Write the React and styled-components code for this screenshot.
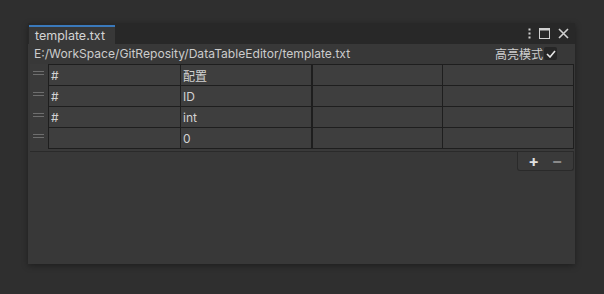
import React from "react";
import styled, { createGlobalStyle } from "styled-components";

const Global = createGlobalStyle`
  body {
    margin: 0;
    background: #2f2f2f;
    font-family: Inter, "Noto Sans CJK SC", sans-serif;
  }
`;

const Page = styled.div`
  width: 604px;
  height: 294px;
  padding: 23px 0 0 28px;
  box-sizing: border-box;
`;

const Window = styled.div`
  width: 547px;
  height: 241px;
  background: #383838;
  display: flex;
  flex-direction: column;
  box-shadow: 0 2px 6px rgba(0, 0, 0, 0.35);
`;

const TabBar = styled.div`
  height: 21px;
  background: #282828;
  display: flex;
  align-items: flex-end;
  padding-left: 1px;
`;

const Tab = styled.div`
  width: 86px;
  height: 19px;
  box-sizing: border-box;
  border-top: 2px solid #3a79bb;
  background: #383838;
  color: #d4d4d4;
  font-size: 12.5px;
  padding-left: 6px;
  display: flex;
  align-items: center;
`;

const TabTools = styled.div`
  margin-left: auto;
  align-self: center;
  display: flex;
  align-items: center;
  gap: 8px;
  padding-right: 6px;
  color: #d0d0d0;
`;

const PathBar = styled.div`
  height: 19px;
  display: flex;
  align-items: center;
  padding: 0 18px 0 6px;
  color: #cccccc;
  font-size: 12.1px;
`;

const Highlight = styled.label`
  margin-left: auto;
  display: flex;
  align-items: center;
  gap: 1px;
  color: #cfcfcf;
  font-size: 12px;
`;

const Check = styled.span`
  width: 13px;
  height: 13px;
  background: #262626;
  border-radius: 2px;
  display: flex;
  align-items: center;
  justify-content: center;
`;

const List = styled.div`
  margin: 1px 0 0 2px;
  width: 544px;
  background: #3a3a3a;
  display: flex;
  border-bottom: 1px solid #2a2a2a;
  padding-bottom: 2px;
`;

const Handles = styled.div`
  width: 19px;
  display: flex;
  flex-direction: column;
  padding-top: 1px;
`;

const Handle = styled.div`
  height: 21px;
  display: flex;
  flex-direction: column;
  gap: 2px;
  padding: 6px 0 0 3px;
  box-sizing: border-box;
  & > span {
    display: block;
    width: 11px;
    height: 1px;
    background: #6e6e6e;
  }
`;

const Grid = styled.div`
  flex: 1;
  display: grid;
  grid-template-columns: 131px 130px 130px 131px;
  border: 1px solid #1e1e1e;
  border-right: none;
  background: #1e1e1e;
  gap: 1px;
`;

const Cell = styled.div`
  height: 20px;
  background: #3e3e3e;
  color: #d2d2d2;
  font-size: 12px;
  display: flex;
  align-items: center;
  padding-left: 2px;
  border-left: ${(p) => (p.thick ? "1px solid #1e1e1e" : "none")};
  border-right: ${(p) => (p.last ? "1px solid #1e1e1e" : "none")};
`;

const Footer = styled.div`
  display: flex;
  justify-content: flex-end;
  padding-right: 1px;
`;

const AddRemove = styled.div`
  width: 57px;
  height: 19px;
  background: #3a3a3a;
  border: 1px solid #2a2a2a;
  border-top: none;
  border-radius: 0 0 3px 3px;
  display: flex;
  align-items: center;
  justify-content: space-around;
  padding: 0 4px;
  box-sizing: border-box;
`;

const Sign = styled.span`
  color: ${(p) => (p.dim ? "#8a8a8a" : "#e0e0e0")};
  font-size: 16px;
  font-weight: 700;
  line-height: 1;
`;

const rows = [
  ["#", "配置", "", ""],
  ["#", "ID", "", ""],
  ["#", "int", "", ""],
  ["", "0", "", ""],
];

export default function App() {
  return (
    <>
      <Global />
      <Page>
        <Window>
          <TabBar>
            <Tab>template.txt</Tab>
            <TabTools>
              <svg width="3" height="11" viewBox="0 0 3 11">
                <rect x="0.5" y="0.5" width="2" height="2" fill="#d0d0d0" />
                <rect x="0.5" y="4.5" width="2" height="2" fill="#d0d0d0" />
                <rect x="0.5" y="8.5" width="2" height="2" fill="#d0d0d0" />
              </svg>
              <svg width="11" height="11" viewBox="0 0 11 11">
                <rect x="0.5" y="0.5" width="10" height="10" fill="none" stroke="#d0d0d0" />
                <rect x="0.5" y="0.5" width="10" height="2" fill="#d0d0d0" />
              </svg>
              <svg width="11" height="11" viewBox="0 0 11 11">
                <path d="M1 1 L10 10 M10 1 L1 10" stroke="#d0d0d0" strokeWidth="1.6" />
              </svg>
            </TabTools>
          </TabBar>
          <PathBar>
            E:/WorkSpace/GitReposity/DataTableEditor/template.txt
            <Highlight>
              高亮模式
              <Check>
                <svg width="10" height="8" viewBox="0 0 10 8">
                  <path d="M1 4 L4 7 L9 1" fill="none" stroke="#e6e6e6" strokeWidth="1.6" />
                </svg>
              </Check>
            </Highlight>
          </PathBar>
          <List>
            <Handles>
              {rows.map((_, i) => (
                <Handle key={i}>
                  <span />
                  <span />
                </Handle>
              ))}
            </Handles>
            <Grid>
              {rows.map((r, i) =>
                r.map((c, j) => (
                  <Cell key={i + "-" + j} thick={j === 2} last={j === 3}>
                    {c}
                  </Cell>
                ))
              )}
            </Grid>
          </List>
          <Footer>
            <AddRemove>
              <Sign>+</Sign>
              <Sign dim>−</Sign>
            </AddRemove>
          </Footer>
        </Window>
      </Page>
    </>
  );
}
